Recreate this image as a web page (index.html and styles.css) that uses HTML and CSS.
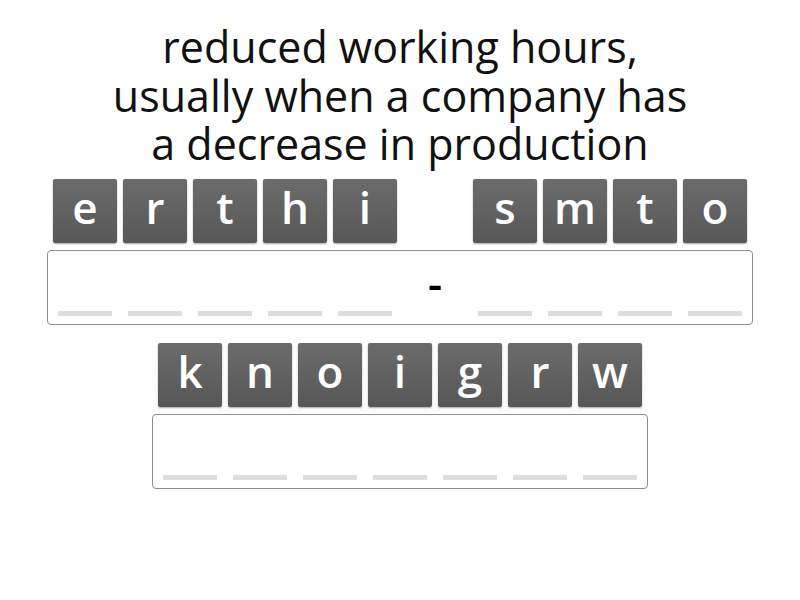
FILE: index.html
```html
<!DOCTYPE html>
<html lang="en">
<head>
<meta charset="utf-8">
<title>Anagram</title>
<link rel="stylesheet" href="styles.css">
</head>
<body>
<main class="game">
  <h1 class="clue">reduced working hours,<br>usually when a company has<br>a decrease in production</h1>

  <section class="word">
    <div class="tiles">
      <span class="tile">e</span>
      <span class="tile">r</span>
      <span class="tile">t</span>
      <span class="tile">h</span>
      <span class="tile">i</span>
      <span class="gap"></span>
      <span class="tile">s</span>
      <span class="tile">m</span>
      <span class="tile">t</span>
      <span class="tile">o</span>
    </div>
    <div class="answer">
      <span class="slot"></span>
      <span class="slot"></span>
      <span class="slot"></span>
      <span class="slot"></span>
      <span class="slot"></span>
      <span class="fixed">-</span>
      <span class="slot"></span>
      <span class="slot"></span>
      <span class="slot"></span>
      <span class="slot"></span>
    </div>
  </section>

  <section class="word">
    <div class="tiles">
      <span class="tile">k</span>
      <span class="tile">n</span>
      <span class="tile">o</span>
      <span class="tile">i</span>
      <span class="tile">g</span>
      <span class="tile">r</span>
      <span class="tile">w</span>
    </div>
    <div class="answer">
      <span class="slot"></span>
      <span class="slot"></span>
      <span class="slot"></span>
      <span class="slot"></span>
      <span class="slot"></span>
      <span class="slot"></span>
      <span class="slot"></span>
    </div>
  </section>
</main>
</body>
</html>
```

FILE: styles.css
```css
html, body {
  margin: 0;
  padding: 0;
  background: #fff;
}

body {
  font-family: "Open Sans", "Liberation Sans", sans-serif;
  color: #111;
}

.game {
  width: 800px;
  height: 600px;
  display: flex;
  flex-direction: column;
  align-items: center;
}

.clue {
  margin: 23px 0 0;
  font-size: 43px;
  font-weight: 400;
  line-height: 48.5px;
  text-align: center;
}

.word {
  display: flex;
  flex-direction: column;
  align-items: center;
}

.word:first-of-type {
  margin-top: 10px;
}

.word + .word {
  margin-top: 18px;
}

.tiles {
  display: flex;
  gap: 6px;
}

.tile,
.gap {
  width: 64px;
  height: 64px;
}

.tile {
  box-sizing: border-box;
  display: flex;
  align-items: center;
  justify-content: center;
  border-radius: 2px;
  background: linear-gradient(#6b6b6b, #575757);
  box-shadow: 0 1px 2px rgba(0, 0, 0, 0.35);
  color: #fff;
  font-size: 44px;
  font-weight: 600;
  line-height: 1;
  padding-bottom: 8px;
}

.answer {
  margin-top: 7px;
  box-sizing: border-box;
  height: 75px;
  display: flex;
  gap: 6px;
  padding: 0 5px;
  border: 1px solid #8f8f8f;
  border-radius: 4px;
}

.slot,
.fixed {
  width: 64px;
  position: relative;
}

.slot::after {
  content: "";
  position: absolute;
  left: 5px;
  right: 5px;
  bottom: 8px;
  height: 5px;
  background: #dedede;
}

.fixed {
  box-sizing: border-box;
  display: flex;
  align-items: center;
  justify-content: center;
  font-size: 44px;
  font-weight: 600;
  line-height: 1;
  color: #000;
  padding-bottom: 8px;
}
```
